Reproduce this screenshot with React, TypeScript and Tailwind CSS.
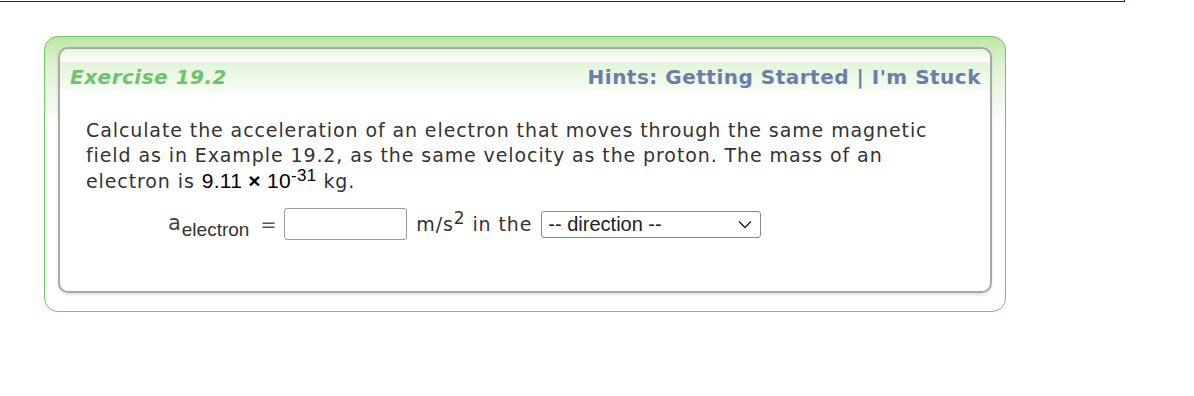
export default function App() {
  return (
    <div className="h-[396px] w-[1194px] bg-white font-['DejaVu_Sans',Verdana,sans-serif]">
      {/* top rule */}
      <div className="h-[2px] w-[1125px] border-b border-r border-[#4d1414]" />

      {/* outer green frame */}
      <div className="ml-[44px] mt-[34px] h-[276px] w-[962px] rounded-[14px] border border-[#6cc964] bg-[linear-gradient(to_bottom,#bde7a5_0px,#dff2d4_30px,#ffffff_90px)] px-[13px] pb-[17px] pt-[10px]">
        <div className="h-[246px] rounded-[10px] border-2 border-[#a8a8a8] bg-[linear-gradient(to_bottom,#e3f4d9_0px,#ffffff_12px)] shadow-[0_2px_3px_rgba(0,0,0,0.12)]">
          {/* header */}
          <div className="mt-[13px] flex h-[29px] items-center justify-between bg-[linear-gradient(to_bottom,#e2f4d9,#f7fcf4)] pl-[10px] pr-[9px] text-[20px] font-bold leading-none tracking-[0.5px]">
            <span className="italic text-[#6cc46a]">Exercise 19.2</span>
            <span className="text-[#6a7eab]">Hints: Getting Started | I'm Stuck</span>
          </div>

          {/* body */}
          <div className="pl-[26px] pt-[27px] text-[#333333]">
            <p className="text-[19px] leading-[25px] tracking-[0.9px]">
              Calculate the acceleration of an electron that moves through the same magnetic
              <br />
              field as in Example 19.2, as the same velocity as the proton. The mass of an
              <br />
              electron is{" "}
              <span className="font-['Liberation_Sans',Arial,sans-serif] text-[21px] tracking-[0.3px] text-black">
                9.11 <span className="font-bold">×</span> 10<sup className="top-[-7px] text-[17px]">-31</sup>
              </span>{" "}
              kg.
            </p>

            <div className="mt-[14px] flex h-[32px] items-center pl-[82px] text-[19px] tracking-[0.9px]">
              <span className="text-[21px] text-[#444]">a</span>
              <span className="mt-[12px] font-['Liberation_Sans',Arial,sans-serif] text-[19px] tracking-normal text-[#333]">electron</span>
              <span className="ml-[11px] text-[#555]">=</span>
              <div className="ml-[7px] h-[32px] w-[123px] rounded-[3px] border border-[#9a9a9a] bg-white" />
              <span className="ml-[9px]">
                m/s<sup className="top-[-7px] text-[17px]">2</sup> in the
              </span>
              <div className="ml-[9px] flex h-[27px] w-[220px] items-center justify-between rounded-[3px] border border-[#8a8a8a] bg-white pl-[6px] pr-[8px] font-['Liberation_Sans',Arial,sans-serif] text-[20px] tracking-normal text-[#222]">
                <span>-- direction --</span>
                <svg width="14" height="9" viewBox="0 0 14 9" fill="none" stroke="#222" strokeWidth="1.5">
                  <path d="M1 1.5l6 6 6-6" />
                </svg>
              </div>
            </div>
          </div>
        </div>
      </div>
    </div>
  );
}
